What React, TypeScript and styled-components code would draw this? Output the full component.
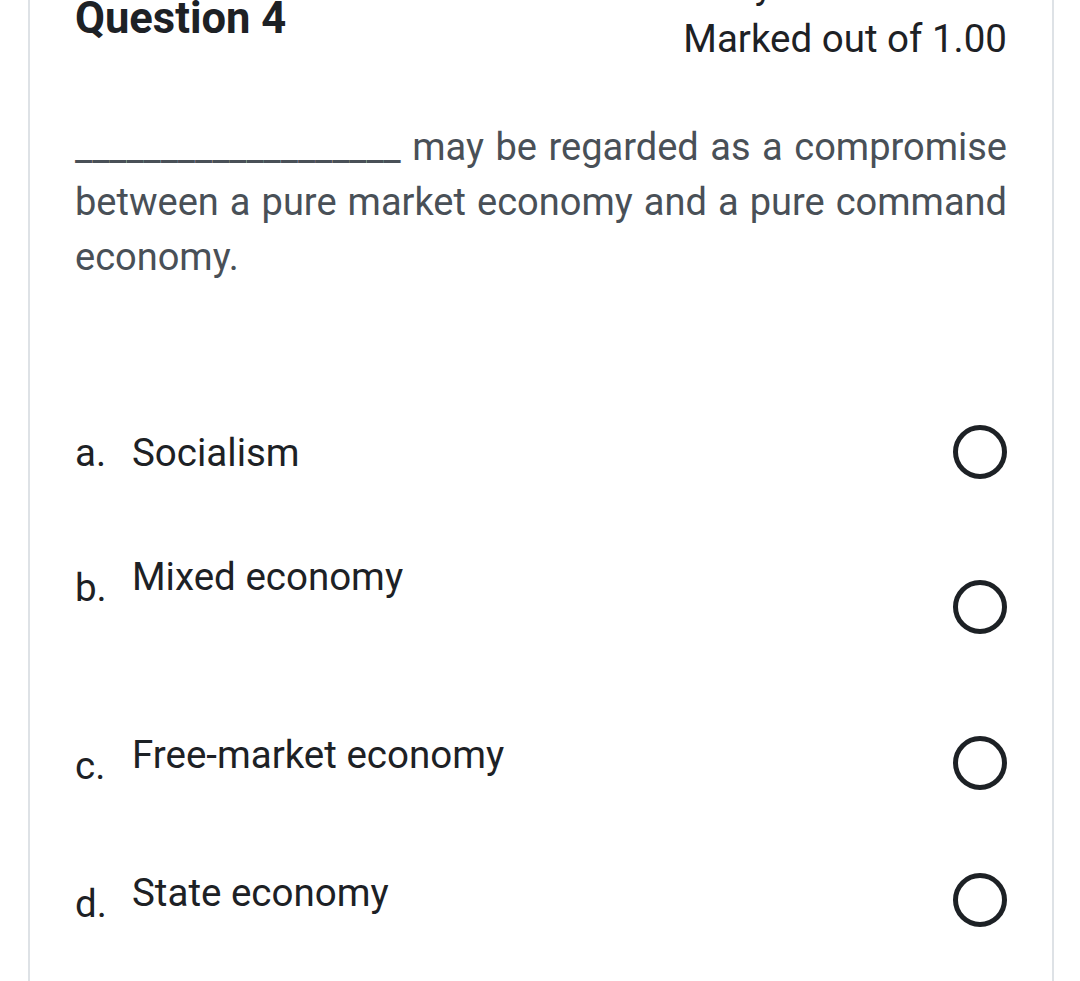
import * as React from 'react';
import styled, { createGlobalStyle } from 'styled-components';

const darkText = "#1d2125";
const mutedText = "#495057";

const GlobalStyle = createGlobalStyle`
  html, body {
    margin: 0;
    padding: 0;
    background: #fff;
    overflow: hidden;
  }
  body {
    font-family: Roboto, "Liberation Sans", sans-serif;
    color: ${darkText};
  }
`;

const Card = styled.div`
  box-sizing: border-box;
  margin: 0 26px 0 28px;
  min-height: 981px;
  padding: 0 45px;
  border-left: 2px solid #dee2e6;
  border-right: 2px solid #dee2e6;
`;

const Header = styled.div`
  display: flex;
  justify-content: space-between;
  align-items: flex-start;
`;

const QuestionTitle = styled.h3`
  margin: -6px 0 0;
  font-size: 43.5px;
  line-height: 50px;
  font-weight: 700;
  color: ${darkText};
`;

const Info = styled.div`
  display: flex;
  flex-direction: column;
  margin-top: -42px;
  font-size: 38.5px;
  line-height: 54px;
  color: ${darkText};
`;

const QuestionText = styled.p`
  margin: 54px 0 0;
  font-size: 38px;
  line-height: 55px;
  color: ${mutedText};
  text-align: justify;
`;

const Options = styled.div`
  display: flex;
  flex-direction: column;
  margin-top: 140px;
`;

const OptionRow = styled.label<{ $top: number }>`
  display: flex;
  align-items: flex-start;
  justify-content: space-between;
  margin-top: ${p => p.$top}px;
  font-size: 38.5px;
  line-height: 55px;
  color: ${darkText};
`;

const OptionLabel = styled.div`
  display: flex;
  align-items: flex-start;
`;

const Letter = styled.span<{ $drop: number }>`
  width: 57px;
  padding-top: ${p => p.$drop}px;
`;

const Radio = styled.input<{ $offset: number }>`
  appearance: none;
  box-sizing: border-box;
  width: 54px;
  height: 54px;
  margin: ${p => p.$offset}px 0 0;
  border: 5px solid ${darkText};
  border-radius: 50%;
  background: #fff;
  flex-shrink: 0;
`;

const answers = [
  { letter: "a.", text: "Socialism", top: 0, drop: 0, radio: 0 },
  { letter: "b.", text: "Mixed economy", top: 69, drop: 11, radio: 31 },
  { letter: "c.", text: "Free-market economy", top: 93, drop: 11, radio: 9 },
  { letter: "d.", text: "State economy", top: 72, drop: 11, radio: 8 },
];

const App: React.FC = () => {
  return (
    <>
      <GlobalStyle />
      <Card>
        <Header>
          <QuestionTitle>Question 4</QuestionTitle>
          <Info>
            <span>Not yet answered</span>
            <span>Marked out of 1.00</span>
          </Info>
        </Header>
        <QuestionText>
          ___________________ may be regarded as a compromise between a pure market economy and a pure command economy.
        </QuestionText>
        <Options>
          {answers.map(a => (
            <OptionRow key={a.letter} $top={a.top}>
              <OptionLabel>
                <Letter $drop={a.drop}>{a.letter}</Letter>
                <span>{a.text}</span>
              </OptionLabel>
              <Radio type="radio" name="q4" $offset={a.radio} />
            </OptionRow>
          ))}
        </Options>
      </Card>
    </>
  );
};

export default App;
